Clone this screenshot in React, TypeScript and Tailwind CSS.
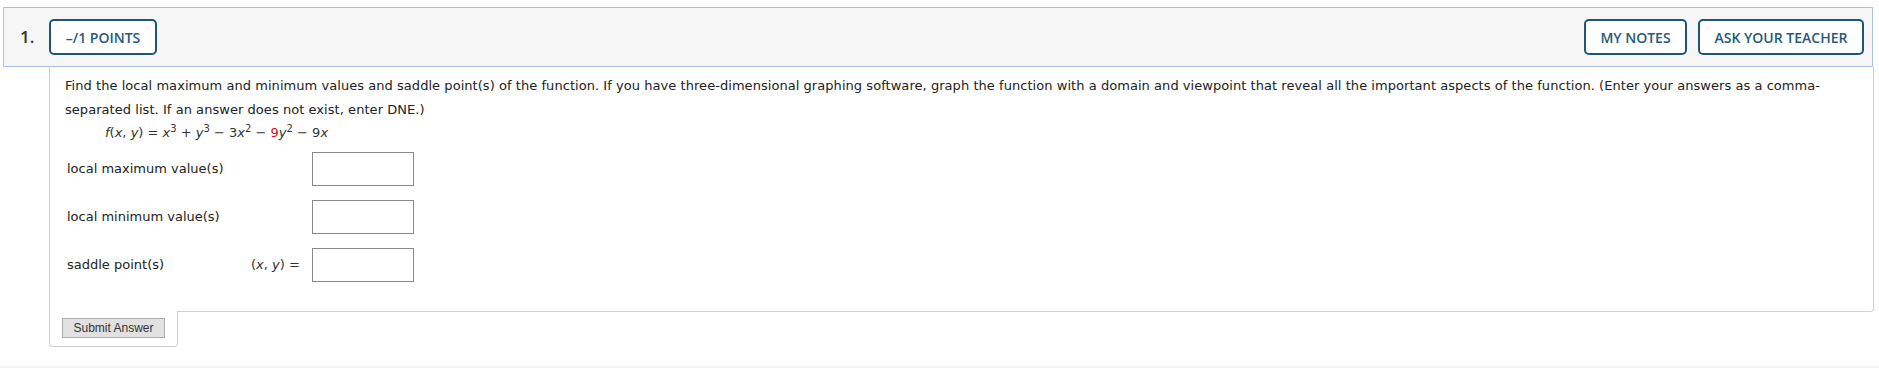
import React from "react";

const HeaderButton = ({ children, className = "" }: { children: React.ReactNode; className?: string }) => (
  <button
    className={`h-[36px] rounded-[5px] border-2 border-[#1f5577] bg-white text-[14px] font-semibold text-[#245a7c] ${className}`}
    style={{ fontFamily: "'Open Sans', sans-serif" }}
  >
    {children}
  </button>
);

const AnswerRow = ({ label, prefix }: { label: string; prefix?: React.ReactNode }) => (
  <div className="flex h-[34px] items-center">
    <span className="w-[186px] pl-[2px] text-[13px] text-[#222]">{label}</span>
    <span className="flex w-[61px] justify-start text-[13px] text-[#333]">{prefix}</span>
    <input type="text" className="h-[34px] w-[102px] border border-[#8a8a8a] bg-white outline-none" />
  </div>
);

const Sup = ({ children }: { children: React.ReactNode }) => (
  <span className="relative -top-[5px] text-[10px] leading-none">{children}</span>
);

export default function App() {
  return (
    <div className="h-[368px] overflow-hidden bg-white pt-[7px]" style={{ fontFamily: "'DejaVu Sans', Verdana, sans-serif" }}>
      {/* question header */}
      <div className="mx-[3px] mr-[6px] flex h-[60px] items-center border border-[#a9c3e6] bg-[#f6f6f6] pl-[16px] pr-[8px]">
        <span className="w-[29px] text-[17px] font-semibold text-[#333]" style={{ fontFamily: "'Open Sans', sans-serif" }}>
          1.
        </span>
        <HeaderButton className="w-[108px]">–/1 POINTS</HeaderButton>
        <div className="ml-auto flex gap-[11px]">
          <HeaderButton className="w-[103px]">MY NOTES</HeaderButton>
          <HeaderButton className="w-[166px]">ASK YOUR TEACHER</HeaderButton>
        </div>
      </div>

      {/* question body */}
      <div className="ml-[49px] mr-[5px] rounded-br-[4px] border-x border-b border-[#cfcfcf] pb-[29px] pl-[15px] pt-[7px]">
        <p className="text-[13px] leading-[24px] tracking-[0.05px] text-[#222]">
          Find the local maximum and minimum values and saddle point(s) of the function. If you have three-dimensional graphing software, graph the function with a domain and viewpoint that reveal all the important aspects of the function. (Enter your answers as a comma-
          <br />
          separated list. If an answer does not exist, enter DNE.)
        </p>
        <div className="h-[22px] pl-[40px] text-[13px] leading-[22px] text-[#333]">
          <i>f</i>(<i>x</i>, <i>y</i>) = <i>x</i>
          <Sup>3</Sup> + <i>y</i>
          <Sup>3</Sup> − 3<i>x</i>
          <Sup>2</Sup> − <span className="text-[#d01010]">9</span>
          <i>y</i>
          <Sup>2</Sup> − 9<i>x</i>
        </div>
        <div className="mt-[8px] flex flex-col gap-[14px]">
          <AnswerRow label="local maximum value(s)" />
          <AnswerRow label="local minimum value(s)" />
          <AnswerRow
            label="saddle point(s)"
            prefix={
              <span>
                (<i>x</i>, <i>y</i>) =
              </span>
            }
          />
        </div>
      </div>

      {/* submit tab */}
      <div className="-mt-px ml-[49px] flex h-[36px] w-[129px] items-start rounded-b-[4px] border-x border-b border-[#cfcfcf] bg-white pl-[12px] pt-[7px]">
        <button
          className="h-[20px] w-[103px] border border-[#adadad] bg-[#e1e1e1] text-[12px] text-[#333]"
          style={{ fontFamily: "'Liberation Sans', Arial, sans-serif" }}
        >
          Submit Answer
        </button>
      </div>

      <div className="mt-[19px] h-[2px] bg-[#f4f4f4]" />
    </div>
  );
}
